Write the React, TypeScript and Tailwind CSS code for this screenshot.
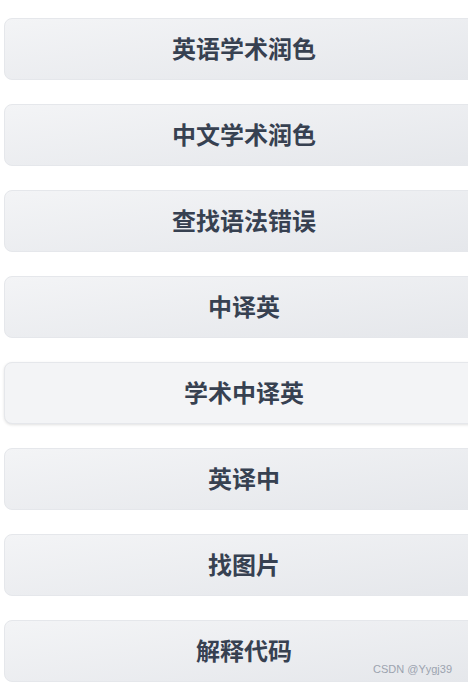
const items = ["英语学术润色", "中文学术润色", "查找语法错误", "中译英", "学术中译英", "英译中", "找图片", "解释代码"];

export default function App() {
  return (
    <div
      className="relative h-[687px] w-[468px] overflow-hidden bg-white"
      style={{ fontFamily: '"Noto Sans", "Noto Sans CJK SC", sans-serif' }}
    >
      <div className="flex flex-col gap-6 pl-1 pt-[18px]">
        {items.map((label) => {
          const hover = label === "学术中译英";
          return (
            <button
              key={label}
              className={`flex h-[62px] w-[480px] shrink-0 items-center justify-center rounded-lg border text-[24px] font-bold text-[#374151] ${
                hover
                  ? "border-[#e5e7eb] bg-[#f3f4f6] shadow-[0_1px_3px_rgba(0,0,0,0.12)]"
                  : "border-[#e5e7eb] bg-gradient-to-br from-[#f3f4f6] to-[#e5e7eb]"
              }`}
            >
              {label}
            </button>
          );
        })}
      </div>
      <div
        className="absolute left-[373px] top-[661px] text-[11px] text-[#9ca3af]"
        style={{ fontFamily: '"Liberation Sans", sans-serif' }}
      >
        CSDN @Yygj39
      </div>
    </div>
  );
}
